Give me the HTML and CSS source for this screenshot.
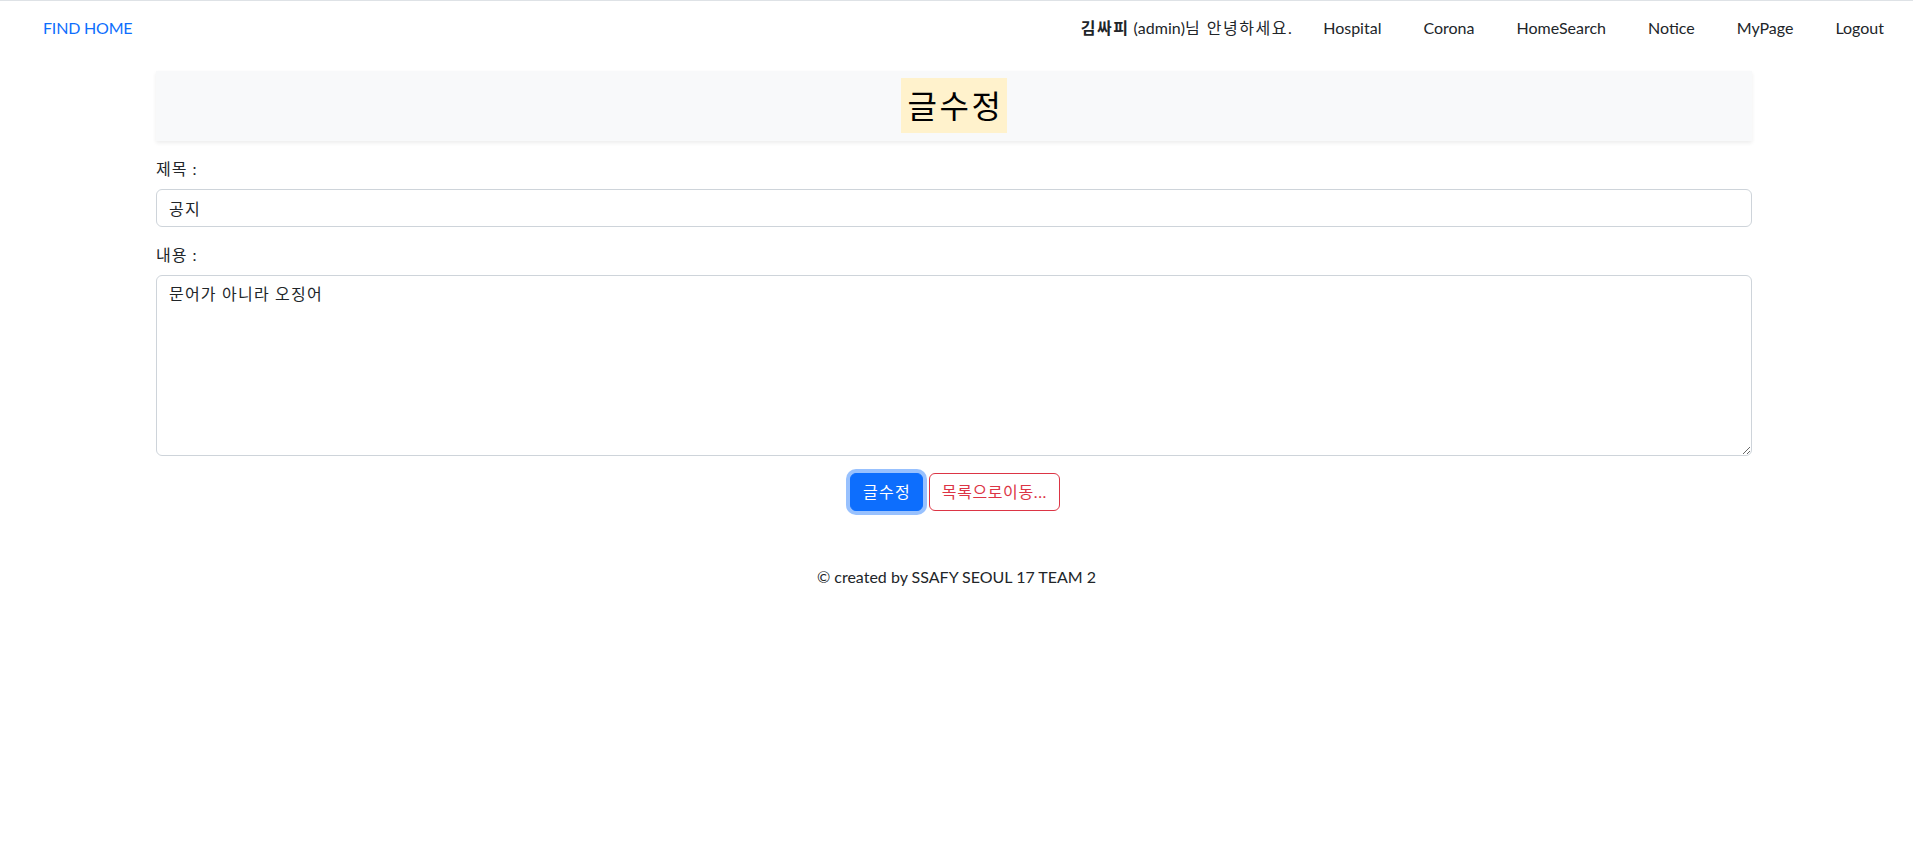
FILE: index.html
```html
<!DOCTYPE html>
<html lang="ko">
<head>
<meta charset="utf-8">
<title>글수정</title>
<link rel="stylesheet" href="styles.css">
</head>
<body>
<nav class="navbar">
  <a class="brand" href="#">FIND HOME</a>
  <div class="nav-right">
    <span class="greeting"><strong class="ko">김싸피</strong> (admin)<span class="ko">님 안녕하세요.</span></span>
    <a class="nav-link" href="#">Hospital</a>
    <a class="nav-link" href="#">Corona</a>
    <a class="nav-link" href="#">HomeSearch</a>
    <a class="nav-link" href="#">Notice</a>
    <a class="nav-link" href="#">MyPage</a>
    <a class="nav-link" href="#">Logout</a>
  </div>
</nav>
<main class="container">
  <div class="title-panel">
    <h2 class="title"><mark class="title-mark">글수정</mark></h2>
  </div>
  <form class="form">
    <label class="form-label" for="subject">제목 :</label>
    <input class="form-control" id="subject" type="text" value="공지">
    <label class="form-label gap-top" for="content">내용 :</label>
    <textarea class="form-control textarea" id="content">문어가 아니라 오징어</textarea>
    <div class="buttons">
      <button type="button" class="btn btn-primary focused">글수정</button>
      <button type="button" class="btn btn-outline-danger">목록으로이동...</button>
    </div>
  </form>
</main>
<footer class="footer">© created by SSAFY SEOUL 17 TEAM 2</footer>
</body>
</html>
```

FILE: styles.css
```css
* { box-sizing: border-box; }
html, body { margin: 0; padding: 0; }
body {
  font-family: "Lato", "Noto Sans CJK KR", sans-serif;
  font-size: 16px;
  line-height: 24px;
  color: #212529;
  background: #fff;
  border-top: 1px solid #dee2e6;
}
a { text-decoration: none; }
.ko { letter-spacing: 1.5px; }

.navbar {
  height: 54px;
  display: flex;
  align-items: center;
  justify-content: space-between;
  padding: 0 8px 0 43px;
}
.brand { color: #0d6efd; font-size: 16px; letter-spacing: -0.2px; }
.nav-right { display: flex; align-items: center; }
.greeting { margin-right: 9px; color: #212529; }
.greeting strong { font-weight: 700; }
.nav-link { color: #212529; padding: 0 21px; }

.container {
  width: 1596px;
  margin-left: 156px;
}
.title-panel {
  margin-top: 16px;
  height: 70px;
  background: #f8f9fa;
  box-shadow: 0 2px 4px rgba(0, 0, 0, 0.075);
  display: flex;
  justify-content: center;
  padding-top: 7px;
}
.title {
  margin: 0;
  font-size: 32px;
  font-weight: 400;
  line-height: 41px;
}
.title-mark {
  display: inline-block;
  background: #fff2cc;
  color: #000;
  padding: 7px 4px 7px 7px;
  height: 55px;
  letter-spacing: 2.5px;
}

.form { display: flex; flex-direction: column; padding-top: 16px; }
.form-label { display: block; margin-bottom: 8px; letter-spacing: 1px; }
.gap-top { margin-top: 16px; }
.form-control {
  display: block;
  width: 100%;
  font-family: inherit;
  font-size: 16px;
  line-height: 24px;
  color: #212529;
  padding: 6px 12px;
  border: 1px solid #ced4da;
  border-radius: 6px;
  background: #fff;
  height: 38px;
  letter-spacing: 1.2px;
}
.textarea { height: 181px; resize: vertical; }

.buttons {
  display: flex;
  justify-content: center;
  gap: 6px;
  margin-top: 17px;
  padding-left: 2px;
}
.btn {
  font-family: inherit;
  font-size: 16px;
  line-height: 24px;
  padding: 6px 12px;
  border-radius: 6px;
  border: 1px solid transparent;
  height: 38px;
  cursor: pointer;
  letter-spacing: 1.2px;
}
.btn-primary { background: #0d6efd; border-color: #0d6efd; color: #fff; padding-right: 11px; }
.focused { box-shadow: 0 0 0 4px rgba(49, 132, 253, 0.5); }
.btn-outline-danger { background: #fff; border-color: #dc3545; color: #dc3545; letter-spacing: 0.6px; }

.footer {
  text-align: center;
  margin-top: 54px;
}
```
